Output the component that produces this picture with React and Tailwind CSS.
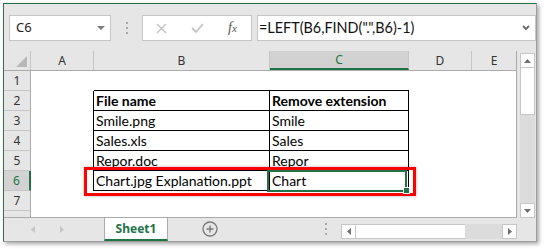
import React from 'react';

const rows = [
  { n: 1 },
  { n: 2, b: 'File name', c: 'Remove extension', head: true },
  { n: 3, b: 'Smile.png', c: 'Smile' },
  { n: 4, b: 'Sales.xls', c: 'Sales' },
  { n: 5, b: 'Repor.doc', c: 'Repor' },
  { n: 6, b: 'Chart.jpg Explanation.ppt', c: 'Chart', sel: true },
  { n: 7 },
];

function Tri({ dir = 'down', color = '#777', w = 7, h = 4 }) {
  const d = {
    down: `M0 0H${w}L${w / 2} ${h}Z`,
    up: `M0 ${h}H${w}L${w / 2} 0Z`,
    left: `M${w} 0V${h}L0 ${h / 2}Z`,
    right: `M0 0V${h}L${w} ${h / 2}Z`,
  }[dir];
  return (
    <svg width={w} height={h} viewBox={`0 0 ${w} ${h}`}>
      <path d={d} fill={color} />
    </svg>
  );
}

function Dots() {
  return (
    <div className="flex flex-col gap-[3px]">
      <div className="w-[2px] h-[2px] bg-[#a8a8a8]" />
      <div className="w-[2px] h-[2px] bg-[#a8a8a8]" />
      <div className="w-[2px] h-[2px] bg-[#a8a8a8]" />
    </div>
  );
}

function FormulaBar() {
  return (
    <div className="flex items-start h-[47px] pt-[11px] pl-[5px]">
      <div className="w-[102px] h-[26px] bg-white border border-[#c6c6c6] flex items-center justify-between pl-[6px] pr-[5px]">
        <span className="text-[13px] text-[#222] font-['Noto_Sans',sans-serif]">C6</span>
        <Tri dir="down" color="#7a7a7a" w={8} h={4} />
      </div>
      <div className="w-[31px] h-[26px] flex items-center justify-center">
        <Dots />
      </div>
      <div className="w-[110px] h-[26px] bg-white border border-[#c6c6c6] flex items-center pl-[13px]">
        <svg width="11" height="11" viewBox="0 0 11 11">
          <path d="M1 1L10 10M10 1L1 10" stroke="#c4c4c4" strokeWidth="1.4" />
        </svg>
        <svg className="ml-[24px]" width="13" height="10" viewBox="0 0 13 10">
          <path d="M1 5L5 9L12 1" stroke="#c4c4c4" strokeWidth="1.8" fill="none" />
        </svg>
        <span className="ml-[24px] text-[14px] italic text-[#555] font-['Liberation_Serif',serif] leading-none">
          f<span className="text-[11px]">x</span>
        </span>
      </div>
      <div className="ml-[5px] w-[279px] h-[26px] bg-white border border-[#c6c6c6] flex items-center justify-between pl-[1px] pr-[5px]">
        <span className="text-[14.4px] text-[#111] font-['Lato',sans-serif]">=LEFT(B6,FIND(".",B6)-1)</span>
        <svg width="8" height="6" viewBox="0 0 8 6">
          <path d="M1 1L4 4L7 1" stroke="#6a6a6a" strokeWidth="1.8" fill="none" />
        </svg>
      </div>
    </div>
  );
}

function HeaderRow() {
  const hd = 'h-full flex items-center justify-center border-r border-r-[#c6c6c6] text-[12px] text-[#333] shrink-0';
  return (
    <div className="flex h-[20px] border-b border-b-[#ababab] font-['Noto_Sans',sans-serif]">
      <div className="w-[27px] h-full shrink-0 border-r border-r-[#c6c6c6] flex items-end justify-end pr-[3px] pb-[3px]">
        <svg width="11" height="11" viewBox="0 0 11 11">
          <path d="M11 0V11H0Z" fill="#b8b8b8" />
        </svg>
      </div>
      <div className={`w-[63px] ${hd}`}>A</div>
      <div className={`w-[176px] ${hd}`}>B</div>
      <div className="w-[139px] h-full shrink-0 flex items-center justify-center bg-[#d2d2d2] border-r border-r-[#c6c6c6] border-b-2 border-b-[#217346] text-[12px] text-[#217346]">
        C
      </div>
      <div className={`w-[63px] ${hd}`}>D</div>
      <div className="w-[44px] h-full shrink-0 flex items-center justify-center text-[12px] text-[#333]">E</div>
    </div>
  );
}

function Row({ r }) {
  const inTable = r.b !== undefined;
  const cell = 'h-full shrink-0 bg-white text-[14px] leading-[20px] pl-[2px] text-black whitespace-nowrap overflow-hidden';
  const bgHead = r.head ? ' bg-[#c6e0b4] font-bold' : '';
  return (
    <div className="flex h-[20px]">
      <div
        className={
          r.sel
            ? 'w-[27px] h-full shrink-0 flex items-center justify-center bg-[#d2d2d2] border-r-2 border-r-[#217346] border-b border-b-[#c6c6c6] text-[12px] text-[#217346] font-["Noto_Sans",sans-serif]'
            : 'w-[27px] h-full shrink-0 flex items-center justify-center border-r border-r-[#ababab] border-b border-b-[#c6c6c6] text-[12px] text-[#333] font-["Noto_Sans",sans-serif]'
        }
      >
        {r.n}
      </div>
      <div className={inTable ? 'w-[63px] h-full shrink-0 bg-white border-r border-black' : 'w-[63px] h-full shrink-0 bg-white'} />
      {inTable ? (
        <>
          <div className={`w-[176px] ${cell} border-r border-b border-black${bgHead}`}>{r.b}</div>
          <div className={`w-[139px] ${cell} border-r border-b border-black${bgHead}`}>{r.c}</div>
        </>
      ) : r.n === 1 ? (
        <>
          <div className="w-[176px] h-full shrink-0 bg-white border-b border-black" />
          <div className="w-[139px] h-full shrink-0 bg-white border-b border-black" />
        </>
      ) : (
        <>
          <div className="w-[176px] h-full shrink-0 bg-white" />
          <div className="w-[139px] h-full shrink-0 bg-white" />
        </>
      )}
      <div className="w-[63px] h-full shrink-0 bg-white" />
      <div className="w-[44px] h-full shrink-0 bg-white" />
    </div>
  );
}

function VScroll() {
  return (
    <div className="w-[19px] shrink-0 pl-[3px] pt-[2px] flex flex-col">
      <div className="w-[15px] h-[15px] bg-white border border-[#c6c6c6] flex items-center justify-center">
        <Tri dir="up" color="#6f6f6f" w={7} h={4} />
      </div>
      <div className="w-[15px] h-[47px] bg-white border border-[#c6c6c6] border-t-0" />
      <div className="w-[15px] flex-1 bg-[#dcdcdc]" />
      <div className="w-[15px] h-[15px] bg-white border border-[#c6c6c6] flex items-center justify-center">
        <Tri dir="down" color="#6f6f6f" w={7} h={4} />
      </div>
    </div>
  );
}

function TabBar() {
  return (
    <div className="flex items-start h-[23px] font-['Noto_Sans',sans-serif]">
      <div className="w-[100px] h-[22px] flex items-center pl-[27px] gap-[25px]">
        <Tri dir="left" color="#c4c4c4" w={4} h={7} />
        <Tri dir="right" color="#c4c4c4" w={4} h={7} />
      </div>
      <div className="w-[64px] h-[23px] bg-white border-x border-[#ababab] border-b-2 border-b-[#217346] flex items-center justify-center text-[12px] font-bold text-[#217346]">
        Sheet1
      </div>
      <div className="ml-[34px] h-[22px] flex items-center">
        <svg width="16" height="16" viewBox="0 0 16 16">
          <circle cx="8" cy="8" r="7" fill="none" stroke="#7a7a7a" strokeWidth="1.3" />
          <path d="M8 4.5V11.5M4.5 8H11.5" stroke="#7a7a7a" strokeWidth="1.4" />
        </svg>
      </div>
      <div className="ml-[107px] h-[22px] flex items-center">
        <Dots />
      </div>
      <div className="ml-[14px] mt-[6px] flex">
        <div className="w-[15px] h-[15px] bg-white border border-[#c6c6c6] flex items-center justify-center">
          <Tri dir="left" color="#6f6f6f" w={4} h={7} />
        </div>
        <div className="w-[109px] h-[15px] bg-white border-y border-[#c6c6c6]" />
        <div className="w-[37px] h-[15px] bg-[#dcdcdc]" />
        <div className="w-[15px] h-[15px] bg-white border border-[#c6c6c6] flex items-center justify-center">
          <Tri dir="right" color="#6f6f6f" w={4} h={7} />
        </div>
      </div>
    </div>
  );
}

export default function App() {
  return (
    <div className="w-[547px] h-[249px] bg-white overflow-hidden pt-[3px] pl-[3px] font-['Lato',sans-serif]">
      <div className="relative w-[534px] h-[239px] bg-[#e6e6e6] border border-[#9c9c9c] border-t-[#217346] border-l-[#3d6b4f] shadow-[2px_2px_4px_rgba(0,0,0,0.35)] flex flex-col">
        <FormulaBar />
        <div className="flex h-[167px]">
          <div className="w-[513px] shrink-0 border-r border-b border-[#ababab] flex flex-col overflow-hidden">
            <HeaderRow />
            {rows.map((r) => (
              <Row key={r.n} r={r} />
            ))}
            <div className="flex h-[6px]">
              <div className="w-[27px] h-full shrink-0 border-r border-r-[#ababab]" />
              <div className="flex-1 bg-white" />
            </div>
          </div>
          <VScroll />
        </div>
        <TabBar />

        {/* red annotation box around row 6 */}
        <div className="absolute left-[80px] top-[163px] w-[332px] h-[29px] border-[3px] border-[#ff0000] shadow-[0_0_3px_rgba(0,0,0,0.3)]" />
        {/* active cell C6 */}
        <div className="absolute left-[263px] top-[166px] w-[140px] h-[22px] border-2 border-[#217346]" />
        <div className="absolute left-[399px] top-[183px] w-[7px] h-[7px] bg-[#217346] border border-white" />
      </div>
    </div>
  );
}
